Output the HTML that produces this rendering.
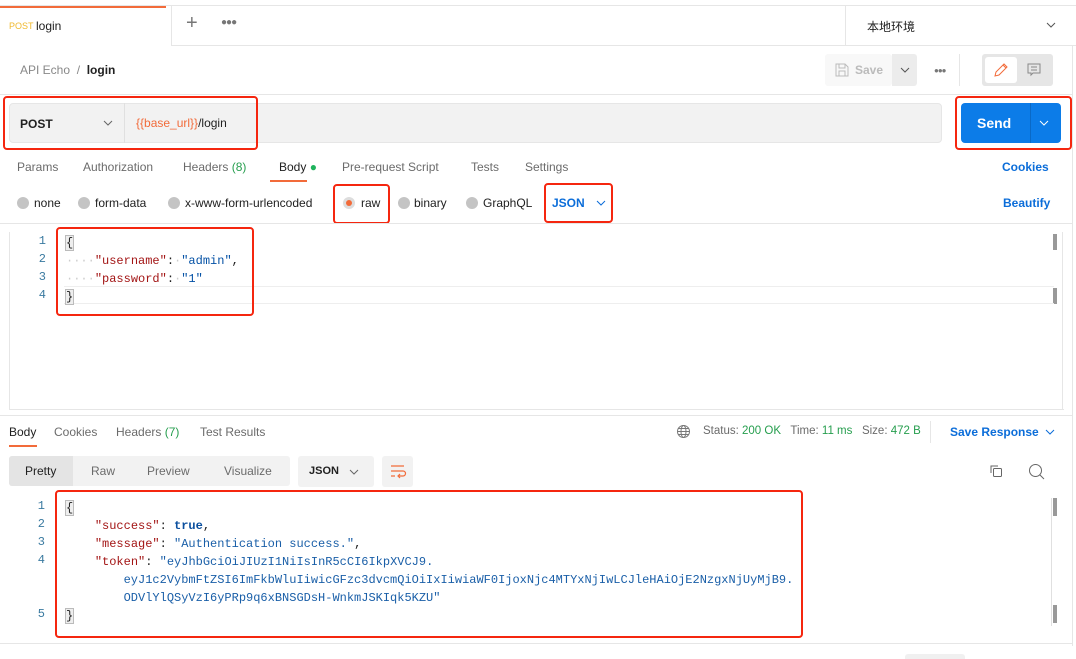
<!DOCTYPE html>
<html><head><meta charset="utf-8"><style>
*{box-sizing:border-box;margin:0;padding:0}
body{width:1076px;height:659px;overflow:hidden;background:#fff;font-family:"Liberation Sans","Noto Sans CJK SC",sans-serif;font-size:12px;color:#212121;position:relative}
.a{position:absolute}
.red{position:absolute;border:2px solid #f5260f;border-radius:4px}
.mono{font-family:"Liberation Mono",monospace;font-size:12px;white-space:pre}
.g{color:#6b6b6b}
.blue{color:#0b6dd9;font-weight:bold}
.radio{position:absolute;width:12px;height:12px;border-radius:50%;background:#c4c4c4;top:197px}
.ln{position:absolute;width:40px;text-align:right;color:#3a7aa0;font-family:"Liberation Mono",monospace;font-size:12px}
.k{color:#a31515}.s{color:#0451a5}.s2{color:#1a5fa8}
</style></head><body>
<div class="a" style="left:0;top:5px;width:1076px;height:1px;background:#e6e6e6"></div>
<div class="a" style="left:0;top:45px;width:1076px;height:1px;background:#e6e6e6"></div>
<div class="a" style="left:0;top:6px;width:166px;height:2px;background:#f26b3a"></div>
<div class="a" style="left:171px;top:6px;width:1px;height:39px;background:#e6e6e6"></div>
<div class="a" style="left:0;top:8px;width:171px;height:38px;background:#fff"></div>
<div class="a" style="left:9px;top:21px;font-size:9px;color:#f0b92d">POST</div>
<div class="a" style="left:36px;top:19px;font-size:12px">login</div>
<div class="a" style="left:186px;top:12px;font-size:20px;color:#777;font-weight:300">+</div>
<div class="a" style="left:221px;top:17px;font-size:10px;color:#777;letter-spacing:-1px">●●●</div>
<div class="a" style="left:845px;top:6px;width:1px;height:39px;background:#e6e6e6"></div>
<div class="a" style="left:867px;top:18px;font-size:12px">本地环境</div>
<svg class="a" style="left:1045px;top:21px" width="12" height="8"><path d="M2 2l4 4 4-4" stroke="#555" fill="none"/></svg>
<div class="a" style="left:1072px;top:46px;width:1px;height:600px;background:#e6e6e6"></div>
<div class="a" style="left:20px;top:63px;font-size:12px;color:#888">API Echo&nbsp; /&nbsp; <b style="color:#212121">login</b></div>
<div class="a" style="left:825px;top:54px;width:67px;height:32px;background:#f8f8f8;border-radius:3px"></div>
<svg class="a" style="left:834px;top:62px" width="16" height="16"><path d="M2 2h9l3 3v9H2z M5 2v4h6V2 M5 14v-5h6v5" stroke="#bbb" fill="none"/></svg>
<div class="a" style="left:855px;top:63px;font-size:12px;color:#bbb;font-weight:bold">Save</div>
<div class="a" style="left:892px;top:54px;width:25px;height:32px;background:#ececec;border-radius:0 3px 3px 0"></div>
<svg class="a" style="left:899px;top:66px" width="12" height="8"><path d="M2 2l4 4 4-4" stroke="#555" fill="none"/></svg>
<div class="a" style="left:934px;top:66px;font-size:8px;color:#777;letter-spacing:-1px">●●●</div>
<div class="a" style="left:959px;top:54px;width:1px;height:32px;background:#e6e6e6"></div>
<div class="a" style="left:982px;top:54px;width:71px;height:32px;background:#e6e6e6;border-radius:3px"></div>
<div class="a" style="left:985px;top:57px;width:32px;height:26px;background:#fff;border-radius:3px"></div>
<svg class="a" style="left:992px;top:61px" width="18" height="18"><path d="M3 15l1-4 8-8 3 3-8 8z M11 4l3 3" stroke="#f26b3a" fill="none"/></svg>
<svg class="a" style="left:1026px;top:62px" width="16" height="16"><path d="M2 2h12v9H7l-2 2v-2H2z M5 5h6 M5 8h6" stroke="#888" fill="none"/></svg>
<div class="a" style="left:0;top:94px;width:1072px;height:1px;background:#e6e6e6"></div>
<div class="a" style="left:9px;top:103px;width:933px;height:40px;background:#f2f2f2;border:1px solid #e6e6e6;border-radius:4px"></div>
<div class="a" style="left:124px;top:103px;width:1px;height:40px;background:#e0e0e0"></div>
<div class="a" style="left:20px;top:117px;font-weight:bold;font-size:12px">POST</div>
<svg class="a" style="left:102px;top:119px" width="12" height="8"><path d="M2 2l4 4 4-4" stroke="#666" fill="none"/></svg>
<div class="a" style="left:136px;top:116px;font-size:12px"><span style="color:#f26b3a">{{base_url}}</span>/login</div>
<div class="a" style="left:961px;top:103px;width:100px;height:40px;background:#0c7ce8;border-radius:4px"></div>
<div class="a" style="left:1030px;top:103px;width:1px;height:40px;background:#0a69c6"></div>
<div class="a" style="left:977px;top:115px;font-size:14px;color:#fff;font-weight:bold">Send</div>
<svg class="a" style="left:1038px;top:119px" width="12" height="8"><path d="M2 2l4 4 4-4" stroke="#fff" fill="none"/></svg>
<div class="red" style="left:3px;top:96px;width:255px;height:54px"></div>
<div class="red" style="left:955px;top:96px;width:117px;height:54px"></div>
<div class="a g" style="left:17px;top:160px;font-size:12px">Params</div>
<div class="a g" style="left:83px;top:160px;font-size:12px">Authorization</div>
<div class="a g" style="left:183px;top:160px;font-size:12px">Headers <span style="color:#269e4e">(8)</span></div>
<div class="a" style="left:279px;top:160px;font-size:12px">Body <span style="color:#1fb35c">●</span></div>
<div class="a" style="left:270px;top:180px;width:37px;height:2px;background:#f26b3a"></div>
<div class="a g" style="left:342px;top:160px;font-size:12px">Pre-request Script</div>
<div class="a g" style="left:471px;top:160px;font-size:12px">Tests</div>
<div class="a g" style="left:525px;top:160px;font-size:12px">Settings</div>
<div class="a blue" style="left:1002px;top:160px;font-size:12px">Cookies</div>
<div class="radio" style="left:17px"></div><div class="a" style="left:34px;top:196px">none</div>
<div class="radio" style="left:78px"></div><div class="a" style="left:95px;top:196px">form-data</div>
<div class="radio" style="left:168px"></div><div class="a" style="left:185px;top:196px">x-www-form-urlencoded</div>
<div class="radio" style="left:343px;background:#ddd"><div style="margin:3px;width:6px;height:6px;border-radius:50%;background:#f26b3a"></div></div><div class="a" style="left:361px;top:196px">raw</div>
<div class="radio" style="left:398px"></div><div class="a" style="left:414px;top:196px">binary</div>
<div class="radio" style="left:466px"></div><div class="a" style="left:483px;top:196px">GraphQL</div>
<div class="a blue" style="left:552px;top:196px">JSON</div>
<svg class="a" style="left:595px;top:199px" width="12" height="8"><path d="M2 2l4 4 4-4" stroke="#0b6dd9" fill="none"/></svg>
<div class="a blue" style="left:1003px;top:196px">Beautify</div>
<div class="red" style="left:333px;top:184px;width:57px;height:40px"></div>
<div class="red" style="left:544px;top:183px;width:69px;height:40px"></div>
<div class="a" style="left:0;top:223px;width:1072px;height:1px;background:#e6e6e6"></div>
<div class="a" style="left:9px;top:232px;width:1px;height:178px;background:#e6e6e6"></div>
<div class="a" style="left:9px;top:409px;width:1055px;height:1px;background:#e6e6e6"></div>
<div class="a" style="left:1062px;top:232px;width:1px;height:178px;background:#e6e6e6"></div>
<div class="a" style="left:1053px;top:234px;width:4px;height:16px;background:#999"></div>
<div class="a" style="left:1053px;top:288px;width:4px;height:16px;background:#999"></div>
<div class="a" style="left:64px;top:286px;width:990px;height:18px;border-top:1px solid #eee;border-bottom:1px solid #eee"></div>
<div class="ln" style="left:6px;top:234px">1</div>
<div class="ln" style="left:6px;top:252px">2</div>
<div class="ln" style="left:6px;top:270px">3</div>
<div class="ln" style="left:6px;top:288px">4</div>
<div class="a mono" style="left:66px;top:234px;line-height:18px"><span style="background:#eee;outline:1px solid #bbb">{</span>
<span style="color:#ccc">····</span><span class="k">"username"</span>:<span style="color:#ccc">·</span><span class="s">"admin"</span>,
<span style="color:#ccc">····</span><span class="k">"password"</span>:<span style="color:#ccc">·</span><span class="s">"1"</span>
<span style="background:#eee;outline:1px solid #bbb">}</span></div>
<div class="red" style="left:56px;top:227px;width:198px;height:89px"></div>
<div class="a" style="left:0;top:415px;width:1072px;height:1px;background:#e6e6e6"></div>
<div class="a" style="left:9px;top:425px">Body</div>
<div class="a" style="left:9px;top:445px;width:28px;height:2px;background:#f26b3a"></div>
<div class="a g" style="left:54px;top:425px">Cookies</div>
<div class="a g" style="left:116px;top:425px">Headers <span style="color:#269e4e">(7)</span></div>
<div class="a g" style="left:200px;top:425px">Test Results</div>
<svg class="a" style="left:676px;top:424px" width="15" height="15"><circle cx="7.5" cy="7.5" r="6" stroke="#777" fill="none"/><ellipse cx="7.5" cy="7.5" rx="2.5" ry="6" stroke="#777" fill="none"/><path d="M1.5 7.5h12M2.5 4.5h10M2.5 10.5h10" stroke="#777"/></svg>
<div class="a g" style="left:703px;top:425px;font-size:11.5px">Status: <span style="color:#269e4e">200 OK</span>&nbsp;&nbsp; Time: <span style="color:#269e4e">11 ms</span>&nbsp;&nbsp; Size: <span style="color:#269e4e">472 B</span></div>
<div class="a" style="left:930px;top:421px;width:1px;height:22px;background:#e6e6e6"></div>
<div class="a blue" style="left:950px;top:425px">Save Response</div>
<svg class="a" style="left:1044px;top:428px" width="12" height="8"><path d="M2 2l4 4 4-4" stroke="#0b6dd9" fill="none"/></svg>
<div class="a" style="left:9px;top:456px;width:281px;height:30px;background:#f2f2f2;border-radius:3px"></div>
<div class="a" style="left:9px;top:456px;width:64px;height:30px;background:#e4e4e4;border-radius:3px 0 0 3px"></div>
<div class="a" style="left:25px;top:464px">Pretty</div>
<div class="a g" style="left:91px;top:464px">Raw</div>
<div class="a g" style="left:147px;top:464px">Preview</div>
<div class="a g" style="left:224px;top:464px">Visualize</div>
<div class="a" style="left:298px;top:456px;width:76px;height:31px;background:#f2f2f2;border-radius:3px"></div>
<div class="a" style="left:309px;top:465px;font-size:11px;font-weight:bold">JSON</div>
<svg class="a" style="left:348px;top:468px" width="12" height="8"><path d="M2 2l4 4 4-4" stroke="#666" fill="none"/></svg>
<div class="a" style="left:382px;top:456px;width:31px;height:31px;background:#f2f2f2;border-radius:3px"></div>
<svg class="a" style="left:389px;top:463px" width="18" height="16"><path d="M2 3h13 M2 8h12a2.5 2.5 0 0 1 0 5h-4 M11 11l-2 2 2 2 M2 13h4" stroke="#f26b3a" fill="none" stroke-width="1.2"/></svg>
<svg class="a" style="left:988px;top:463px" width="16" height="16"><path d="M3 10V3h7" stroke="#666" fill="none"/><rect x="5.5" y="5.5" width="8" height="8" rx="1" stroke="#666" fill="none"/></svg>
<svg class="a" style="left:1028px;top:463px" width="18" height="18"><circle cx="7.5" cy="7.5" r="6" stroke="#666" fill="none"/><path d="M12 12l4 4" stroke="#666"/></svg>
<div class="a" style="left:1051px;top:498px;width:1px;height:128px;background:#e0e0e0"></div>
<div class="a" style="left:1053px;top:498px;width:4px;height:18px;background:#999"></div>
<div class="a" style="left:1053px;top:605px;width:4px;height:18px;background:#999"></div>
<div class="ln" style="left:5px;top:499px">1</div>
<div class="ln" style="left:5px;top:517px">2</div>
<div class="ln" style="left:5px;top:535px">3</div>
<div class="ln" style="left:5px;top:553px">4</div>
<div class="ln" style="left:5px;top:607px">5</div>
<div class="a mono" style="left:66px;top:499px;line-height:18px"><span style="background:#eee;outline:1px solid #bbb">{</span>
    <span class="k">"success"</span>: <b style="color:#0b4f9e">true</b>,
    <span class="k">"message"</span>: <span class="s2">"Authentication success."</span>,
    <span class="k">"token"</span>: <span class="s2">"eyJhbGciOiJIUzI1NiIsInR5cCI6IkpXVCJ9.</span>
<span class="s2">        eyJ1c2VybmFtZSI6ImFkbWluIiwicGFzc3dvcmQiOiIxIiwiaWF0IjoxNjc4MTYxNjIwLCJleHAiOjE2NzgxNjUyMjB9.</span>
<span class="s2">        ODVlYlQSyVzI6yPRp9q6xBNSGDsH-WnkmJSKIqk5KZU"</span>
<span style="background:#eee;outline:1px solid #bbb">}</span></div>
<div class="red" style="left:55px;top:490px;width:748px;height:148px"></div>
<div class="a" style="left:0;top:643px;width:1072px;height:1px;background:#e6e6e6"></div>
<div class="a" style="left:905px;top:654px;width:60px;height:5px;background:#f0f0f0;border-radius:3px 3px 0 0"></div>
</body></html>
